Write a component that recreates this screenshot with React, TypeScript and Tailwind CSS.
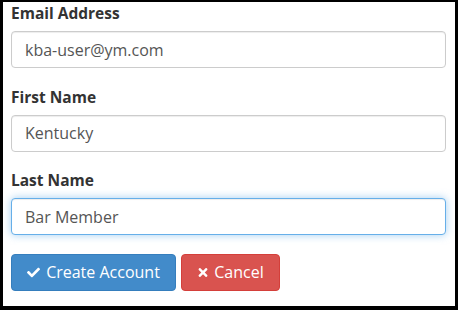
import React from "react";
import { FaCheck, FaTimes } from "react-icons/fa";

const font = { fontFamily: '"Open Sans", "Noto Sans", sans-serif' };

function Field({ label, value, focused }: { label: string; value: string; focused?: boolean }) {
  return (
    <div className="flex flex-col">
      <label className="text-[15.5px] leading-[21px] font-bold text-[#333] mb-[7px]">{label}</label>
      <input
        readOnly
        value={value}
        className={
          focused
            ? "h-[37px] w-full rounded-[4px] border border-[#66afe9] bg-white px-[13px] text-[16px] text-[#555] outline-none shadow-[inset_0_1px_1px_rgba(0,0,0,0.075),0_0_8px_rgba(102,175,233,0.6)]"
            : "h-[37px] w-full rounded-[4px] border border-[#ccc] bg-white px-[13px] text-[16px] text-[#555] outline-none shadow-[inset_0_1px_1px_rgba(0,0,0,0.075)]"
        }
        style={font}
      />
    </div>
  );
}

export default function App() {
  return (
    <div
      className="w-[458px] h-[310px] bg-white border-black border-l-[3px] border-t-[2px] border-r-[3px] border-b-[4px] pl-[8px] pr-[9px] pt-[1px] flex flex-col gap-[18.5px]"
      style={font}
    >
      <Field label="Email Address" value="kba-user@ym.com" />
      <Field label="First Name" value="Kentucky" />
      <Field label="Last Name" value="Bar Member" focused />
      <div className="flex gap-[5px]">
        <button className="h-[37px] w-[165px] rounded-[4px] bg-[#428bca] border border-[#357ebd] text-white text-[16px] flex items-center justify-center gap-[6px]">
          <FaCheck className="w-[13px] h-[13px]" />
          <span>Create Account</span>
        </button>
        <button className="h-[37px] w-[99px] rounded-[4px] bg-[#d9534f] border border-[#d43f3a] text-white text-[16px] flex items-center justify-center gap-[5px]">
          <FaTimes className="w-[12px] h-[13px]" />
          <span>Cancel</span>
        </button>
      </div>
    </div>
  );
}
